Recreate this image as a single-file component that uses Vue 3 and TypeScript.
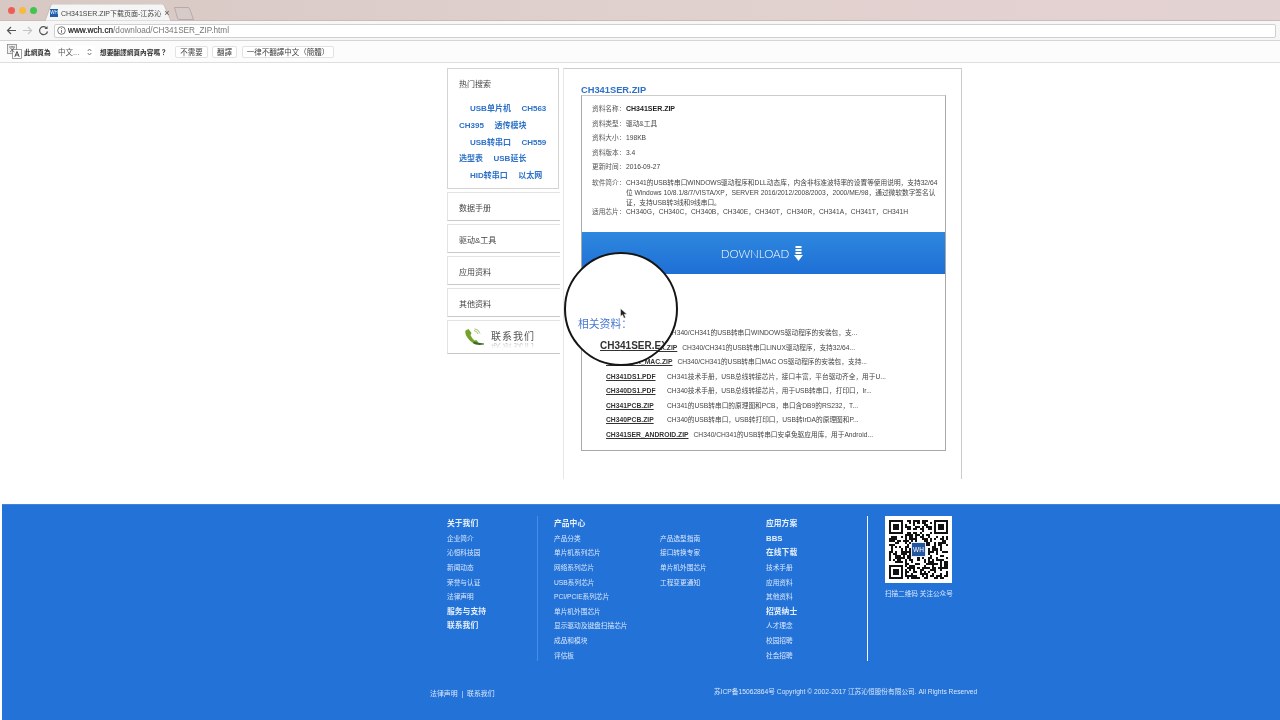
<script setup lang="ts">
interface Field {
    label: string;
    value: string;
    bold?: boolean;
}

interface Related {
    name: string;
    desc: string;
}

const hotRows: { indent: boolean; links: string[] }[] = [
    { indent: true, links: ['USB单片机', 'CH563'] },
    { indent: false, links: ['CH395', '透传模块'] },
    { indent: true, links: ['USB转串口', 'CH559'] },
    { indent: false, links: ['选型表', 'USB延长'] },
    { indent: true, links: ['HID转串口', '以太网'] },
];

const navItems = ['数据手册', '驱动&工具', '应用资料', '其他资料'];

const fields: Field[] = [
    { label: '资料名称：', value: 'CH341SER.ZIP', bold: true },
    { label: '资料类型：', value: '驱动&工具' },
    { label: '资料大小：', value: '198KB' },
    { label: '资料版本：', value: '3.4' },
    { label: '更新时间：', value: '2016-09-27' },
];

const related: Related[] = [
    { name: 'CH341SER.EXE', desc: 'CH340/CH341的USB转串口WINDOWS驱动程序的安装包，支...' },
    { name: 'CH341SER_LINUX.ZIP', desc: 'CH340/CH341的USB转串口LINUX驱动程序，支持32/64...' },
    { name: 'CH341SER_MAC.ZIP', desc: 'CH340/CH341的USB转串口MAC OS驱动程序的安装包，支持...' },
    { name: 'CH341DS1.PDF', desc: 'CH341技术手册，USB总线转接芯片，接口丰富，平台驱动齐全，用于U...' },
    { name: 'CH340DS1.PDF', desc: 'CH340技术手册，USB总线转接芯片，用于USB转串口，打印口，Ir...' },
    { name: 'CH341PCB.ZIP', desc: 'CH341的USB转串口的原理图和PCB，串口含DB9的RS232，T...' },
    { name: 'CH340PCB.ZIP', desc: 'CH340的USB转串口，USB转打印口，USB转IrDA的原理图和P...' },
    { name: 'CH341SER_ANDROID.ZIP', desc: 'CH340/CH341的USB转串口安卓免驱应用库，用于Android...' },
];

const aboutLinks = ['企业简介', '沁恒科技园', '新闻动态', '荣誉与认证', '法律声明'];
const productsA = ['产品分类', '单片机系列芯片', '网络系列芯片', 'USB系列芯片', 'PCI/PCIE系列芯片', '单片机外围芯片', '显示驱动及键盘扫描芯片', '成品和模块', '评估板'];
const productsB = ['产品选型指南', '接口转换专家', '单片机外围芯片', '工程变更通知'];

// fake qr modules, only the texture has to read right
const QR_SIZE = 29;

function inFinder(x: number, y: number): boolean {
    const near = (v: number, o: number) => v >= o && v < o + 8;
    return (near(x, 0) && near(y, 0)) || (near(x, QR_SIZE - 8) && near(y, 0)) || (near(x, 0) && near(y, QR_SIZE - 8));
}

function buildQr(): { x: number; y: number }[] {
    const cells: { x: number; y: number }[] = [];
    let seed = 341;
    for (let y = 0; y < QR_SIZE; y++) {
        for (let x = 0; x < QR_SIZE; x++) {
            seed = (seed * 1103515245 + 12345) & 0x7fffffff;
            if (!inFinder(x, y) && (seed >> 16) % 100 < 52) cells.push({ x, y });
        }
    }
    return cells;
}

const qrCells = buildQr();
const finders = [
    { x: 0, y: 0 },
    { x: QR_SIZE - 7, y: 0 },
    { x: 0, y: QR_SIZE - 7 },
];
</script>

<template>
    <div class="page">
        <header class="browser">
            <div class="tabstrip">
                <div class="lights">
                    <span class="light light--red"></span>
                    <span class="light light--yellow"></span>
                    <span class="light light--green"></span>
                </div>
                <div class="tab">
                    <svg class="tab-shape" viewBox="0 0 126 17" preserveAspectRatio="none">
                        <path d="M0 17 L6 1 Q6.500 0 8 0 H117 Q118.500 0 119 1 L126 17 Z" fill="#f5f5f5" stroke="#b5a9a6" stroke-width="0.6" />
                    </svg>
                    <span class="favicon">WH</span>
                    <span class="tab-title">CH341SER.ZIP下载页面-江苏沁</span>
                    <span class="tab-close">×</span>
                </div>
                <svg class="newtab" width="20" height="13" viewBox="0 0 20 13">
                    <path d="M0.500 0.500 H14 Q15 0.500 15.500 1.500 L19.500 12.500 H5 Q4 12.500 3.600 11.500 Z" fill="#d6cbc9" stroke="#a89d9b" stroke-width="0.7" />
                </svg>
            </div>
            <div class="toolbar">
                <svg class="nav-icon" width="11" height="11" viewBox="0 0 11 11" fill="none" stroke="#555" stroke-width="1.2">
                    <path d="M10 5.500 H1.500 M5 2 L1.500 5.500 L5 9" />
                </svg>
                <svg class="nav-icon" width="11" height="11" viewBox="0 0 11 11" fill="none" stroke="#c4c4c4" stroke-width="1.2">
                    <path d="M1 5.500 H9.500 M6 2 L9.500 5.500 L6 9" />
                </svg>
                <svg class="nav-icon" width="11" height="11" viewBox="0 0 11 11" fill="none" stroke="#555" stroke-width="1.2">
                    <path d="M9 3.500 A4 4 0 1 0 9.500 6.500" />
                    <path d="M9.500 1 V4 H6.500" fill="#555" stroke="none" />
                </svg>
                <div class="urlbar">
                    <svg width="9" height="9" viewBox="0 0 9 9" fill="none" stroke="#555" stroke-width="0.8">
                        <circle cx="4.500" cy="4.500" r="3.800" />
                        <path d="M4.500 4 V6.800 M4.500 2.200 V3.100" />
                    </svg>
                    <span class="url"><b>www.wch.cn</b>/download/CH341SER_ZIP.html</span>
                </div>
            </div>
            <div class="translate">
                <svg class="translate-icon" width="15" height="15" viewBox="0 0 15 15">
                    <rect x="0.500" y="0.500" width="9" height="9" fill="#eee" stroke="#777" stroke-width="0.7" />
                    <rect x="5.500" y="5.500" width="9" height="9" fill="#fff" stroke="#777" stroke-width="0.7" />
                    <path d="M2 3 H8 M5 2 V3 M3 8 Q6 6 7 3.500 M3.500 4 Q5 7 7.500 8" fill="none" stroke="#555" stroke-width="0.7" />
                    <path d="M7.800 12.800 L10 7.500 L12.200 12.800 M8.600 11 H11.400" fill="none" stroke="#333" stroke-width="0.9" />
                </svg>
                <span class="translate-text translate-lead">此網頁為</span>
                <span class="translate-select">
                    中文...
                    <svg width="5" height="8" viewBox="0 0 5 8" fill="none" stroke="#555" stroke-width="0.8">
                        <path d="M0.700 3 L2.500 1 L4.300 3 M0.700 5 L2.500 7 L4.300 5" />
                    </svg>
                </span>
                <span class="translate-text translate-ask">想要翻譯網頁內容嗎？</span>
                <span class="translate-btn translate-btn--no">不需要</span>
                <span class="translate-btn translate-btn--yes">翻譯</span>
                <span class="translate-btn translate-btn--never">一律不翻譯中文（簡體）</span>
            </div>
        </header>

        <main class="content">
            <aside class="sidebar">
                <div class="hot">
                    <div class="hot-title">热门搜索</div>
                    <div v-for="(row, i) in hotRows" :key="i" class="hot-row" :class="{ 'hot-row--indent': row.indent }">
                        <a v-for="link in row.links" :key="link" class="hot-link">{{ link }}</a>
                    </div>
                </div>
                <div v-for="item in navItems" :key="item" class="side-item">{{ item }}</div>
                <div class="contact">
                    <svg class="contact-phone" width="21" height="18" viewBox="0 0 21 18" fill="none">
                        <path d="M1.500 2.500 Q0.500 6 4 10.500 Q7.500 15 12.500 16 L15 15.500 L12.500 12 L10.500 12.500 Q8 11 6.500 7 L7.500 5 L4.500 1 Z" fill="#74a328" />
                        <path d="M8.500 15 Q12.500 17.800 20 16.500 L20 15.400 L13 14.500 L10.500 13.500 Z" fill="#3a6a2a" />
                        <path d="M10 2.500 Q13 3 14 6 M10.500 0.800 Q15 1.500 16 5.500" stroke="#9cc46c" stroke-width="1" />
                    </svg>
                    <span class="contact-text">联系我们</span>
                </div>
            </aside>

            <section class="detail">
                <h1 class="detail-title">CH341SER.ZIP</h1>
                <div class="detail-box">
                    <div class="fields">
                        <div v-for="f in fields" :key="f.label" class="field">
                            <span class="field-label">{{ f.label }}</span>
                            <span class="field-value" :class="{ 'field-value--bold': f.bold }">{{ f.value }}</span>
                        </div>
                        <div class="field field--intro">
                            <span class="field-label">软件简介：</span>
                            <span class="field-value">CH341的USB转串口WINDOWS驱动程序和DLL动态库，内含非标准波特率的设置等使用说明，支持32/64位 Windows 10/8.1/8/7/VISTA/XP，SERVER 2016/2012/2008/2003，2000/ME/98，通过微软数字签名认证，支持USB转3线和9线串口。</span>
                        </div>
                        <div class="field field--chips">
                            <span class="field-label">适用芯片：</span>
                            <span class="field-value">CH340G，CH340C，CH340B，CH340E，CH340T，CH340R，CH341A，CH341T，CH341H</span>
                        </div>
                    </div>
                    <div class="download">
                        <span class="download-text">DOWNLOAD</span>
                        <svg width="9" height="15" viewBox="0 0 9 15" fill="#fff">
                            <rect x="1.500" y="0" width="6" height="2" />
                            <rect x="1.500" y="3" width="6" height="2" />
                            <rect x="1.500" y="6" width="6" height="2" />
                            <path d="M0 9 H9 L4.500 15 Z" />
                        </svg>
                    </div>
                    <div class="related">
                        <div v-for="r in related" :key="r.name" class="related-row">
                            <a class="related-name">{{ r.name }}</a>
                            <span class="related-desc">{{ r.desc }}</span>
                        </div>
                    </div>
                </div>
                <div class="lens">
                    <span class="lens-heading">相关资料：</span>
                    <a class="lens-link">CH341SER.EXE</a>
                    <svg class="lens-cursor" width="8" height="11" viewBox="0 0 8 11">
                        <path d="M0.500 0.500 V8.500 L2.500 6.800 L4 10.200 L5.600 9.500 L4.200 6.300 H7 Z" fill="#222" stroke="#fff" stroke-width="0.500" />
                    </svg>
                </div>
            </section>
        </main>

        <footer class="footer">
            <div class="footer-main">
                <div class="fcol fcol--about">
                    <div class="fhead">关于我们</div>
                    <div v-for="l in aboutLinks" :key="l" class="flink">{{ l }}</div>
                    <div class="fhead">服务与支持</div>
                    <div class="fhead">联系我们</div>
                </div>
                <div class="fcol fcol--products">
                    <div class="fhead">产品中心</div>
                    <div v-for="l in productsA" :key="l" class="flink">{{ l }}</div>
                </div>
                <div class="fcol fcol--products2">
                    <div class="fhead">&nbsp;</div>
                    <div v-for="l in productsB" :key="l" class="flink">{{ l }}</div>
                </div>
                <div class="fcol fcol--solutions">
                    <div class="fhead">应用方案</div>
                    <div class="fhead">BBS</div>
                    <div class="fhead">在线下载</div>
                    <div class="flink">技术手册</div>
                    <div class="flink">应用资料</div>
                    <div class="flink">其他资料</div>
                    <div class="fhead">招贤纳士</div>
                    <div class="flink">人才理念</div>
                    <div class="flink">校园招聘</div>
                    <div class="flink">社会招聘</div>
                </div>
                <div class="qr-block">
                    <div class="qr">
                        <svg width="59" height="59" :viewBox="`0 0 ${QR_SIZE} ${QR_SIZE}`" shape-rendering="crispEdges">
                            <rect v-for="c in qrCells" :key="`${c.x}-${c.y}`" :x="c.x" :y="c.y" width="1" height="1" fill="#111" />
                            <g v-for="f in finders" :key="f.x * 100 + f.y">
                                <rect :x="f.x" :y="f.y" width="7" height="7" fill="#111" />
                                <rect :x="f.x + 1" :y="f.y + 1" width="5" height="5" fill="#fff" />
                                <rect :x="f.x + 2" :y="f.y + 2" width="3" height="3" fill="#111" />
                            </g>
                        </svg>
                        <span class="qr-logo">WH</span>
                    </div>
                    <div class="qr-caption">扫描二维码 关注公众号</div>
                </div>
            </div>
            <div class="footer-bottom">
                <span class="footer-legal">法律声明&nbsp;&nbsp;|&nbsp;&nbsp;联系我们</span>
                <span class="footer-copy">苏ICP备15062864号 Copyright © 2002-2017 江苏沁恒股份有限公司. All Rights Reserved</span>
            </div>
        </footer>
    </div>
</template>

<style scoped>
.page {
    width: 1280px;
    height: 720px;
    display: flex;
    flex-direction: column;
    overflow: hidden;
    background: #fff;
    color: #333;
    font-family: "Liberation Sans", "Noto Sans CJK SC", sans-serif;
    filter: blur(0.35px);
}

/* browser chrome */
.browser {
    flex: none;
    height: 63px;
    display: flex;
    flex-direction: column;
}

.tabstrip {
    height: 21px;
    display: flex;
    align-items: flex-end;
    background: linear-gradient(90deg, #d8c8c4, #e0d0cd 45%, #e3d2d2);
    border-bottom: 1px solid #c9bdba;
    box-sizing: border-box;
}

.lights {
    display: flex;
    gap: 4px;
    align-self: center;
    margin-left: 8px;
    margin-top: 1px;
}

.light {
    width: 7px;
    height: 7px;
    border-radius: 50%;
}

.light--red { background: #ee5c54; }
.light--yellow { background: #f4bb3c; }
.light--green { background: #41c54f; }

.tab {
    position: relative;
    flex: none;
    width: 126px;
    height: 17px;
    margin-left: 8px;
    margin-bottom: -1px;
    display: flex;
    align-items: center;
    padding-left: 5px;
    box-sizing: border-box;
}

.tab-shape {
    position: absolute;
    inset: 0;
    width: 100%;
    height: 100%;
}

.favicon {
    position: relative;
    flex: none;
    width: 8px;
    height: 8px;
    background: #1d5fae;
    color: #fff;
    font-size: 4.500px;
    line-height: 8px;
    text-align: center;
}

.tab-title {
    position: relative;
    flex: none;
    margin-left: 3px;
    font-size: 7px;
    white-space: nowrap;
    color: #444;
}

.tab-close {
    position: relative;
    margin-left: 3px;
    font-size: 9px;
    color: #555;
}

.newtab {
    margin-left: 3px;
    margin-bottom: 0;
}

.toolbar {
    height: 20px;
    display: flex;
    align-items: center;
    gap: 5px;
    padding: 0 4px 0 6px;
    background: #f6f6f6;
    border-bottom: 1px solid #d5d5d5;
    box-sizing: border-box;
}

.urlbar {
    flex: 1;
    height: 14px;
    display: flex;
    align-items: center;
    gap: 2px;
    padding-left: 2px;
    background: #fff;
    border: 1px solid #d0d0d0;
    border-radius: 2px;
    box-sizing: border-box;
}

.url {
    font-size: 8.200px;
    color: #777;
}

.url b {
    font-weight: normal;
    color: #222;
    -webkit-text-stroke: 0.2px #222;
}

.translate {
    height: 22px;
    display: flex;
    align-items: center;
    padding: 0 0 0 7px;
    background: #fcfcfc;
    border-bottom: 1px solid #dedede;
    box-sizing: border-box;
}

.translate-icon {
    flex: none;
}

.translate-text {
    font-family: "Liberation Sans", "Noto Sans CJK TC", sans-serif;
    font-size: 6.700px;
    font-weight: 700;
    color: #333;
}

.translate-lead {
    margin-left: 2px;
    width: 32px;
}

.translate-select {
    width: 39px;
    height: 12px;
    display: flex;
    align-items: center;
    justify-content: space-between;
    padding: 0 3px 0 2px;
    box-sizing: border-box;
    font-family: "Liberation Sans", "Noto Sans CJK TC", sans-serif;
    font-size: 7.500px;
    color: #555;
    background: #fff;
    border-radius: 2px;
}

.translate-ask {
    margin-left: 5px;
    width: 75px;
}

.translate-btn {
    height: 12px;
    display: flex;
    align-items: center;
    justify-content: center;
    font-family: "Liberation Sans", "Noto Sans CJK TC", sans-serif;
    font-size: 7.500px;
    color: #444;
    background: #fff;
    border: 1px solid #e2e2e2;
    border-radius: 2px;
    box-sizing: border-box;
}

.translate-btn--no { width: 33px; }
.translate-btn--yes { width: 25px; margin-left: 4px; }
.translate-btn--never { width: 92px; margin-left: 5px; }

/* page body */
.content {
    flex: none;
    height: 441px;
    display: flex;
    align-items: flex-start;
    gap: 3px;
    padding: 5px 0 0 447px;
    box-sizing: border-box;
}

.sidebar {
    width: 113px;
    display: flex;
    flex-direction: column;
    gap: 3px;
}

.hot {
    width: 112px;
    height: 121px;
    padding: 10px 0 0 11px;
    border: 1px solid #d4d4d4;
    box-sizing: border-box;
}

.hot-title {
    font-size: 8px;
    line-height: 11px;
    color: #444;
    margin-bottom: 13px;
}

.hot-row {
    display: flex;
    gap: 10.500px;
    height: 16.800px;
    line-height: 12px;
}

.hot-row--indent {
    padding-left: 11px;
}

.hot-link {
    font-size: 8px;
    font-weight: 700;
    color: #2d71c8;
}

.side-item {
    height: 29px;
    padding: 1px 0 0 11px;
    display: flex;
    align-items: center;
    font-size: 8px;
    color: #444;
    border: 1px solid #e4e4e4;
    border-right: none;
    border-bottom-color: #c8c8c8;
    box-sizing: border-box;
}

.contact {
    height: 34px;
    display: flex;
    align-items: center;
    padding-left: 16px;
    gap: 6px;
    border: 1px solid #e4e4e4;
    border-right: none;
    border-bottom-color: #c8c8c8;
    box-sizing: border-box;
}

.contact-text {
    font-size: 10px;
    line-height: 12px;
    letter-spacing: 1px;
    color: #555;
    -webkit-box-reflect: below -2px linear-gradient(transparent 40%, rgba(0, 0, 0, 0.55));
}

.detail {
    position: relative;
    width: 399px;
    height: 411px;
    padding: 16px 16px 0 17px;
    border: 1px solid #ccc;
    border-left-color: #e6e6e6;
    border-bottom: none;
    box-sizing: border-box;
}

.detail-title {
    margin: 0;
    font-size: 9.300px;
    line-height: 10px;
    font-weight: 700;
    color: #2d71c8;
}

.detail-box {
    width: 365px;
    height: 356px;
    border: 1px solid #a9a9a9;
    border-top-color: #ccc;
    box-sizing: border-box;
}

.fields {
    height: 136px;
    padding: 6px 6px 0 10px;
    box-sizing: border-box;
}

.field {
    display: flex;
    height: 14.500px;
    line-height: 14.500px;
    font-size: 6.700px;
}

.field--intro {
    height: auto;
    margin-top: 1px;
    line-height: 10px;
    padding-top: 2px;
}

.field--chips {
    margin-top: -3px;
}

.field-label {
    flex: none;
    width: 34px;
    color: #555;
}

.field-value {
    color: #444;
}

.field-value--bold {
    font-weight: 700;
    font-size: 7px;
    color: #222;
}

.download {
    height: 42px;
    display: flex;
    align-items: center;
    justify-content: center;
    gap: 5px;
    padding-right: 3px;
    box-sizing: border-box;
    background: linear-gradient(#2f88de, #1e6fd6);
}

.download-text {
    font-family: Lato, "Liberation Sans", sans-serif;
    font-weight: 300;
    font-size: 11.500px;
    color: #fff;
}

.related {
    padding: 52.300px 0 0 24px;
}

.related-row {
    display: flex;
    height: 14.500px;
    line-height: 14.500px;
    font-size: 6.700px;
    white-space: nowrap;
}

.related-name {
    min-width: 56px;
    padding-right: 5px;
    font-size: 6.750px;
    font-weight: 700;
    color: #333;
    text-decoration: underline;
}

.related-desc {
    color: #444;
}

/* magnifier over the related list */
.lens {
    position: absolute;
    left: 0;
    top: 183px;
    width: 114px;
    height: 114px;
    border: 2px solid #151515;
    border-radius: 50%;
    background: #fff;
    overflow: hidden;
    box-sizing: border-box;
}

.lens-heading {
    position: absolute;
    left: 12px;
    top: 64px;
    font-size: 10.800px;
    line-height: 13px;
    color: #4a78d0;
    white-space: nowrap;
}

.lens-link {
    position: absolute;
    left: 34px;
    top: 85px;
    font-size: 10px;
    line-height: 13px;
    font-weight: 700;
    color: #333;
    text-decoration: underline;
    white-space: nowrap;
}

.lens-cursor {
    position: absolute;
    left: 54px;
    top: 54px;
}

/* footer */
.footer {
    flex: none;
    height: 216px;
    margin-left: 2px;
    padding: 11px 0 0 445px;
    background: #2272d8;
    border-top: 1px solid #3f85de;
    box-sizing: border-box;
    color: #dfeafa;
}

.footer-main {
    display: flex;
    align-items: flex-start;
}

.fcol {
    padding-top: 1px;
    box-sizing: border-box;
}

.fcol--about {
    width: 91px;
    height: 145px;
    border-right: 1px solid #4a8ce0;
}

.fcol--products {
    width: 122px;
    padding-left: 16px;
}

.fcol--products2 {
    width: 106px;
}

.fcol--solutions {
    width: 102px;
    height: 145px;
    border-right: 1px solid #f2f6fd;
}

.fhead {
    height: 14.650px;
    line-height: 14.650px;
    font-size: 7.800px;
    font-weight: 700;
    color: #e6effb;
    white-space: nowrap;
}

.flink {
    height: 14.650px;
    line-height: 14.650px;
    font-size: 6.700px;
    color: #dbe7f9;
    white-space: nowrap;
}

.qr-block {
    margin-left: 17px;
}

.qr {
    position: relative;
    width: 67px;
    height: 67px;
    display: flex;
    align-items: center;
    justify-content: center;
    background: #fff;
}

.qr-logo {
    position: absolute;
    left: 26px;
    top: 26px;
    width: 15px;
    height: 15px;
    background: #2456a0;
    border: 1px solid #e8eef8;
    box-sizing: border-box;
    font-size: 6.500px;
    line-height: 13px;
    text-align: center;
    color: #fff;
}

.qr-caption {
    margin-top: 6px;
    font-size: 6.600px;
    line-height: 9px;
    color: #dbe7f9;
    white-space: nowrap;
}

.footer-bottom {
    display: flex;
    margin: 23px 0 0 -17px;
    height: 14px;
    align-items: center;
}

.footer-legal {
    width: 284px;
    font-size: 6.900px;
    color: #dbe7f9;
}

.footer-copy {
    font-size: 6.700px;
    color: #dbe7f9;
    margin-top: -4px;
}
</style>

<style>
html,
body {
    margin: 0;
    overflow: hidden;
    background: #fff;
}
</style>
